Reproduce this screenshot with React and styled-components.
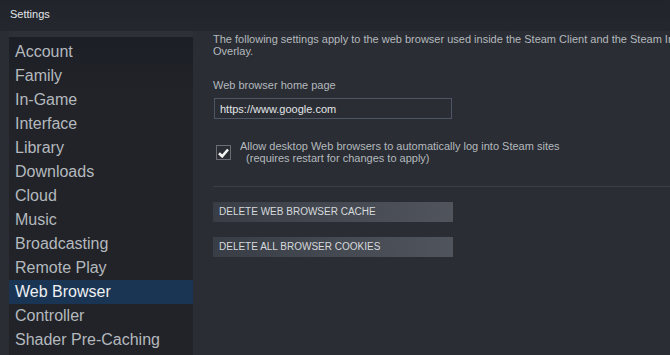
import React from "react";
import styled, { createGlobalStyle } from "styled-components";

const GlobalStyle = createGlobalStyle`
  html, body {
    margin: 0;
    padding: 0;
    background: #2a2d33;
  }
  * {
    box-sizing: border-box;
  }
`;

const sections = [
  "Account",
  "Family",
  "In-Game",
  "Interface",
  "Library",
  "Downloads",
  "Cloud",
  "Music",
  "Broadcasting",
  "Remote Play",
  "Web Browser",
  "Controller",
  "Shader Pre-Caching",
];

function App() {
  return (
    <Window>
      <GlobalStyle />
      <TitleBar>Settings</TitleBar>
      <Body>
        <Sidebar>
          <SidebarCap />
          <NavList>
            {sections.map((name) => (
              <NavItem key={name} $active={name === "Web Browser"}>
                {name}
              </NavItem>
            ))}
          </NavList>
        </Sidebar>
        <Content>
          <Intro>
            The following settings apply to the web browser used inside the Steam Client and the Steam In-Game
            Overlay.
          </Intro>
          <FieldLabel>Web browser home page</FieldLabel>
          <UrlInput defaultValue="https://www.google.com" />
          <CheckRow>
            <CheckBox>
              <svg width="11" height="10" viewBox="0 0 11 10">
                <path d="M1 5.2 L4.2 8.3 L10 1.5" fill="none" stroke="#f2f2f2" strokeWidth="2.6" />
              </svg>
            </CheckBox>
            <CheckText>
              Allow desktop Web browsers to automatically log into Steam sites
              <br />
              &nbsp;&nbsp;(requires restart for changes to apply)
            </CheckText>
          </CheckRow>
          <Divider />
          <ActionButton>Delete web browser cache</ActionButton>
          <ActionButton>Delete all browser cookies</ActionButton>
        </Content>
      </Body>
    </Window>
  );
}

export default App;

const Window = styled.div`
  width: 670px;
  height: 355px;
  display: flex;
  flex-direction: column;
  overflow: hidden;
  font-family: "Liberation Sans", Arial, sans-serif;
  background: #2a2d33;
`;

const TitleBar = styled.div`
  height: 31px;
  flex: none;
  display: flex;
  align-items: center;
  padding: 0 0 3px 10px;
  font-size: 11px;
  color: #e4e6e8;
  background: linear-gradient(#21242a, #24272e);
`;

const Body = styled.div`
  flex: 1;
  display: flex;
  min-height: 0;
`;

const Sidebar = styled.div`
  width: 184px;
  margin-left: 9px;
  flex: none;
  display: flex;
  flex-direction: column;
  background: linear-gradient(#1b1e25 0px, #212328 60px, #212328);
`;

const SidebarCap = styled.div`
  height: 6px;
  background: #2d3037;
`;

const NavList = styled.div`
  display: flex;
  flex-direction: column;
  padding-top: 3px;
`;

const NavItem = styled.div`
  height: 24px;
  line-height: 24px;
  padding-left: 6px;
  font-size: 16px;
  white-space: nowrap;
  color: ${(p) => (p.$active ? "#eef0f2" : "#b4b9be")};
  background: ${(p) => (p.$active ? "#1a3553" : "transparent")};
`;

const Content = styled.div`
  flex: 1;
  min-width: 0;
  padding: 2px 0 0 20px;
  display: flex;
  flex-direction: column;
  align-items: flex-start;
  color: #b4b9be;
  font-size: 11px;
  line-height: 12px;
`;

const Intro = styled.div`
  width: 520px;
  flex: none;
`;

const FieldLabel = styled.div`
  margin-top: 22px;
`;

const UrlInput = styled.input`
  margin: 7px 0 0 1px;
  width: 238px;
  height: 21px;
  padding: 0 0 0 5px;
  border: 1px solid #4e5564;
  background: #2a2d33;
  color: #e2e5e8;
  font-family: "Liberation Sans", Arial, sans-serif;
  font-size: 11px;
  outline: none;
`;

const CheckRow = styled.div`
  margin-top: 21px;
  display: flex;
  align-items: flex-start;
`;

const CheckBox = styled.div`
  width: 15px;
  height: 15px;
  margin: 5px 0 0 3px;
  border: 1px solid #6a6d72;
  display: flex;
  align-items: center;
  justify-content: center;
  flex: none;
`;

const CheckText = styled.div`
  margin-left: 9px;
`;

const Divider = styled.div`
  align-self: stretch;
  height: 1px;
  margin-top: 22px;
  background: #3c3f45;
`;

const ActionButton = styled.div`
  margin-top: 15px;
  width: 240px;
  height: 20px;
  display: flex;
  align-items: center;
  padding-left: 6px;
  font-size: 10px;
  text-transform: uppercase;
  color: #d6dadd;
  background: linear-gradient(to right, #393d45, #50545c);
`;
